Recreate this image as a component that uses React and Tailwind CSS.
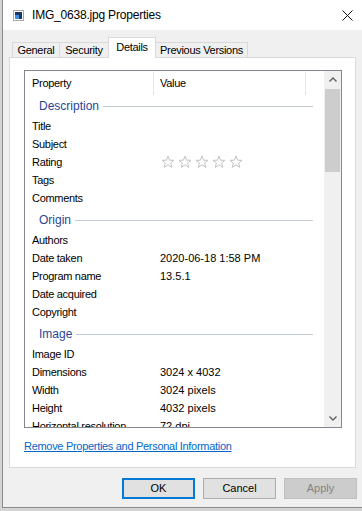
import React from 'react';

const groups = [
    {
        name: 'Description',
        first: true,
        rows: [['Title'], ['Subject'], ['Rating', 'stars'], ['Tags'], ['Comments']],
    },
    {
        name: 'Origin',
        rows: [
            ['Authors'],
            ['Date taken', '2020-06-18 1:58 PM'],
            ['Program name', '13.5.1'],
            ['Date acquired'],
            ['Copyright'],
        ],
    },
    {
        name: 'Image',
        rows: [
            ['Image ID'],
            ['Dimensions', '3024 x 4032'],
            ['Width', '3024 pixels'],
            ['Height', '4032 pixels'],
            ['Horizontal resolution', '72 dpi'],
        ],
    },
];

const Star = () => (
    <svg width="14" height="14" viewBox="0 0 14 14">
        <path
            d="M7 1 L8.6 5.2 L13 5.3 L9.6 8 L10.8 12.4 L7 9.8 L3.2 12.4 L4.4 8 L1 5.3 L5.4 5.2 Z"
            fill="none"
            stroke="#c4c4c4"
            strokeWidth="1"
            strokeLinejoin="round"
        />
    </svg>
);

const GroupRow = ({ name, first }) => (
    <div className={`${first ? 'h-[21px] pt-[3px]' : 'h-[24px] pt-[6px]'} pl-[14px] pr-[11px]`}>
        <div className="flex items-center h-[14px] gap-[4px]">
            <span className="text-[12px] leading-[14px] text-[#2a4596]">{name}</span>
            <div className="flex-1 h-px bg-[#c4cad4]" />
        </div>
    </div>
);

const ItemRow = ({ label, value }) => (
    <div className="h-[18px] flex items-center text-[11px] text-black">
        <div className="w-[135px] shrink-0 pl-[7px] tracking-[-0.3px] whitespace-nowrap">{label}</div>
        {value === 'stars' ? (
            <div className="flex gap-[3px] pl-[1px]">
                <Star />
                <Star />
                <Star />
                <Star />
                <Star />
            </div>
        ) : (
            <div className="whitespace-nowrap">{value}</div>
        )}
    </div>
);

const Tab = ({ label, className }) => (
    <div className={`flex items-center justify-center text-[11px] tracking-[-0.3px] text-black ${className}`}>
        {label}
    </div>
);

export default function App() {
    return (
        <div className="w-[362px] h-[511px] flex bg-[#d4d4d4] overflow-hidden font-['Liberation_Sans',Arial,sans-serif]">
            <div className="w-[2px] shrink-0" />
            <div className="flex-1 h-[508px] flex flex-col border-l border-b border-[#8b8b8b] bg-[#f0f0f0]">
                {/* title bar */}
                <div className="h-[30px] bg-white flex items-center shrink-0">
                    <svg className="ml-[10px]" width="11" height="11" viewBox="0 0 11 11">
                        <rect x="0.5" y="0.5" width="10" height="10" fill="#ffffff" stroke="#a8a8a8" />
                        <rect x="2" y="2" width="7" height="7" fill="#1c3566" />
                        <rect x="2" y="5" width="4" height="4" fill="#3d8fe0" />
                    </svg>
                    <span className="ml-[8px] text-[12px] tracking-[-0.2px] text-black">IMG_0638.jpg Properties</span>
                    <svg className="ml-auto mr-[9px]" width="11" height="11" viewBox="0 0 11 11">
                        <path d="M0.5 0.5 L10.5 10.5 M10.5 0.5 L0.5 10.5" stroke="#111" strokeWidth="1" />
                    </svg>
                </div>

                {/* tabs */}
                <div className="mt-[7px] ml-[9px] h-[21px] flex items-end shrink-0">
                    <Tab label="General" className="w-[47px] h-[16px] pb-[1px] border-l border-t border-[#d9d9d9]" />
                    <Tab label="Security" className="w-[49px] h-[16px] pb-[1px] border-l border-t border-[#d9d9d9]" />
                    <Tab label="Details" className="relative z-10 w-[48px] h-[21px] pb-[1px] bg-white border-l border-r border-t border-[#d9d9d9]" />
                    <Tab label="Previous Versions" className="w-[92px] h-[16px] pb-[1px] border-r border-t border-[#d9d9d9]" />
                </div>

                {/* panel */}
                <div className="-mt-px ml-[6px] w-[347px] h-[411px] shrink-0 bg-white border border-[#d9d9d9] flex flex-col">
                    <div className="mt-[12px] ml-[14px] w-[318px] h-[358px] border border-[#828790] flex">
                        <div className="flex-1 overflow-hidden">
                            <div className="h-[25px] flex text-[11px] text-black">
                                <div className="w-[128px] pl-[7px] flex items-center tracking-[-0.3px]">Property</div>
                                <div className="w-px my-[1px] bg-[#e5e5e5]" />
                                <div className="w-[151px] pl-[6px] flex items-center tracking-[-0.3px]">Value</div>
                                <div className="w-px my-[1px] bg-[#e5e5e5]" />
                            </div>
                            {groups.map((g) => (
                                <div key={g.name}>
                                    <GroupRow name={g.name} first={g.first} />
                                    {g.rows.map(([label, value]) => (
                                        <ItemRow key={label} label={label} value={value} />
                                    ))}
                                </div>
                            ))}
                        </div>
                        <div className="w-[17px] shrink-0 bg-[#f0f0f0] flex flex-col">
                            <div className="h-[17px] flex items-center justify-center">
                                <svg width="8" height="5" viewBox="0 0 8 5">
                                    <path d="M0.5 4.5 L4 1 L7.5 4.5" fill="none" stroke="#606060" strokeWidth="1.4" />
                                </svg>
                            </div>
                            <div className="mt-[1px] mx-[1px] h-[83px] bg-[#cdcdcd]" />
                            <div className="mt-auto h-[17px] flex items-center justify-center">
                                <svg width="8" height="5" viewBox="0 0 8 5">
                                    <path d="M0.5 0.5 L4 4 L7.5 0.5" fill="none" stroke="#606060" strokeWidth="1.4" />
                                </svg>
                            </div>
                        </div>
                    </div>
                    <a className="mt-[11px] ml-[14px] self-start text-[11px] leading-[14px] tracking-[-0.3px] text-[#0066cc] underline cursor-pointer">
                        Remove Properties and Personal Information
                    </a>
                </div>

                {/* buttons */}
                <div className="mt-[10px] pr-[5px] flex justify-end gap-[8px] shrink-0">
                    <button className="w-[73px] h-[21px] bg-[#e1e1e1] border-2 border-[#0078d7] text-[11px] text-black">OK</button>
                    <button className="w-[73px] h-[21px] bg-[#e1e1e1] border border-[#adadad] text-[11px] text-black">Cancel</button>
                    <button className="w-[73px] h-[21px] bg-[#cccccc] border border-[#bfbfbf] text-[11px] text-[#838383]">Apply</button>
                </div>
            </div>
        </div>
    );
}
